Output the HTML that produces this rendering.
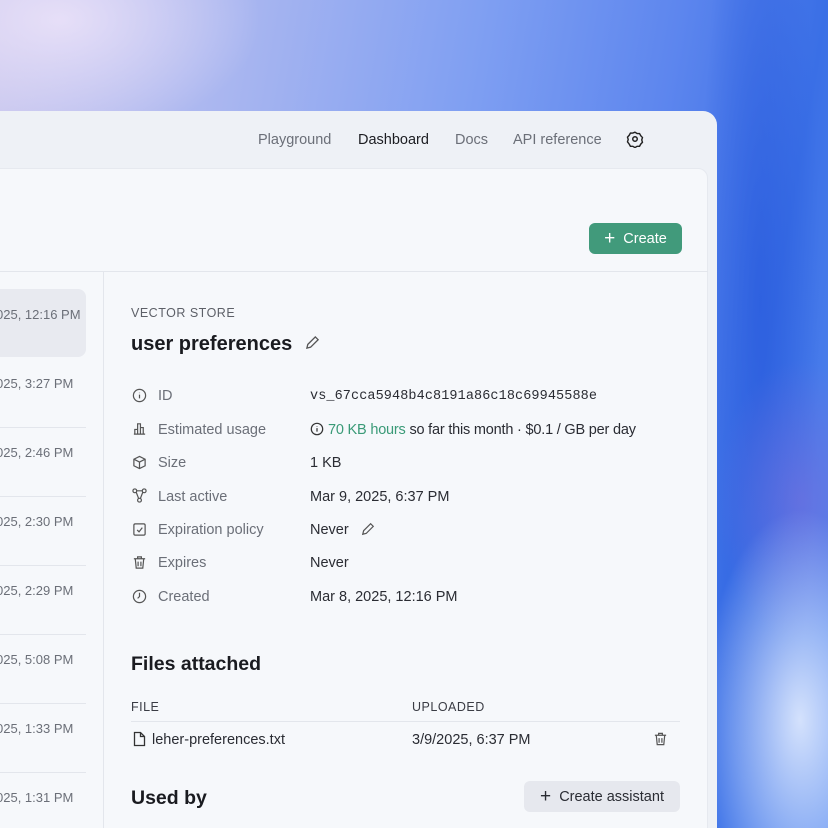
<!DOCTYPE html>
<html style="overflow:hidden;width:828px;height:828px"><head><meta charset="utf-8"><style>
*{margin:0;padding:0;box-sizing:border-box}
body{width:828px;height:828px;overflow:hidden;position:relative;font-family:"Liberation Sans",sans-serif;
background:linear-gradient(100deg,#c9c7ee 0%,#a9b6f0 25%,#7f9ff2 50%,#5d86ee 70%,#3a6fe6 85%,#5a8cf0 100%);}
.bg2{position:absolute;inset:0;background:
radial-gradient(ellipse 200px 120px at 60px 20px,rgba(240,230,250,.8),transparent),
radial-gradient(ellipse 140px 300px at 800px 720px,rgba(235,242,255,.85),transparent 70%),
radial-gradient(ellipse 120px 200px at 800px 500px,rgba(120,110,220,.6),transparent 70%),
radial-gradient(ellipse 60px 500px at 760px 300px,rgba(40,90,220,.7),transparent);}
.win{position:absolute;left:-20px;top:111px;width:737px;height:740px;background:#eef1f6;border-radius:14px;}
.card{position:absolute;left:-20px;top:168px;width:728px;height:700px;background:#f6f8fb;border-radius:10px;border:1px solid #e6e9ef}
.nav{position:absolute;top:132px;font-size:14.5px;color:#6b6f78}
.hl{position:absolute;left:0;top:271px;width:708px;height:1px;background:#e3e6ec}
.vl{position:absolute;left:103px;top:272px;width:1px;height:560px;background:#e3e6ec}
.sel{position:absolute;left:-10px;top:289px;width:96px;height:68px;background:#e8eaf0;border-radius:8px}
.li{position:absolute;left:-4px;font-size:13px;color:#6b6f78}
.sep{position:absolute;left:0;width:86px;height:1px;background:#e3e6ec}
.t{position:absolute;white-space:nowrap}
.lab{font-size:14.5px;color:#6b6f78;left:158px}
.val{font-size:14.5px;color:#2a2c33;left:310px}
.ic{position:absolute;left:132px;width:15px;height:15px}
</style></head><body>
<div class="bg2"></div>
<div class="win"></div>
<div class="card"></div>
<div class="nav" style="left:258px">Playground</div>
<div class="nav" style="left:358px;color:#1c1d22">Dashboard</div>
<div class="nav" style="left:455px">Docs</div>
<div class="nav" style="left:513px">API reference</div>
<svg style="position:absolute;left:626px;top:130px" width="18" height="18" viewBox="0 0 24 24" fill="none" stroke="#222" stroke-width="2"><path d="M12 2.5l3 1.8 3.4.1 1.7 3 2.4 2.6-1 3.3 1 3.3-2.4 2.6-1.7 3-3.4.1-3 1.8-3-1.8-3.4-.1-1.7-3L1.5 16l1-3.3-1-3.3 2.4-2.6 1.7-3 3.4-.1z" transform="scale(.95) translate(.6 .6)"/><circle cx="12" cy="12" r="3"/></svg>
<div style="position:absolute;left:589px;top:223px;width:93px;height:31px;background:#419a7b;border-radius:6px;color:#fff;font-size:14.5px;line-height:31px;text-align:center"><span style="font-size:19px;vertical-align:-1px">+</span>&nbsp; Create</div>
<div class="hl"></div><div class="vl"></div>
<div class="sel"></div>
<div class="li" style="top:307px">025, 12:16 PM</div>
<div class="li" style="top:376px">025, 3:27 PM</div>
<div class="sep" style="top:427px"></div>
<div class="li" style="top:445px">025, 2:46 PM</div>
<div class="sep" style="top:496px"></div>
<div class="li" style="top:514px">025, 2:30 PM</div>
<div class="sep" style="top:565px"></div>
<div class="li" style="top:583px">025, 2:29 PM</div>
<div class="sep" style="top:634px"></div>
<div class="li" style="top:652px">025, 5:08 PM</div>
<div class="sep" style="top:703px"></div>
<div class="li" style="top:721px">025, 1:33 PM</div>
<div class="sep" style="top:772px"></div>
<div class="li" style="top:790px">025, 1:31 PM</div>

<div class="t" style="left:131px;top:306px;font-size:12.5px;color:#5d6068;letter-spacing:.5px">VECTOR STORE</div>
<div class="t" style="left:131px;top:333px;font-size:20px;font-weight:bold;color:#1a1b20">user preferences</div>
<svg style="position:absolute;left:305px;top:335px" width="15" height="15" viewBox="0 0 16 16" fill="none" stroke="#555" stroke-width="1.4"><path d="M2 14l1-4 8-8 3 3-8 8z"/></svg>

<svg class="ic" style="top:388px" viewBox="0 0 16 16" fill="none" stroke="#555" stroke-width="1.3"><circle cx="8" cy="8" r="6.5"/><path d="M8 7v4M8 5v.5"/></svg>
<div class="t lab" style="top:388px">ID</div>
<div class="t val" style="top:389px;font-family:'Liberation Mono',monospace;font-size:13.5px;letter-spacing:.1px">vs_67cca5948b4c8191a86c18c69945588e</div>
<svg class="ic" style="top:421px" viewBox="0 0 16 16" fill="none" stroke="#555" stroke-width="1.3"><path d="M2 14h12M3 14V9h3v5M6 14V3h3v11M9 14V7h3v7"/></svg>
<div class="t lab" style="top:422px">Estimated usage</div>
<svg style="position:absolute;left:310px;top:422px" width="14" height="14" viewBox="0 0 16 16" fill="none" stroke="#333" stroke-width="1.4"><circle cx="8" cy="8" r="6.5"/><path d="M8 7v4M8 5v.5"/></svg>
<div class="t val" style="top:422px;left:328px;letter-spacing:-.2px"><span style="color:#3a9a77">70 KB hours</span> so far this month · $0.1 / GB per day</div>
<svg class="ic" style="top:455px" viewBox="0 0 16 16" fill="none" stroke="#555" stroke-width="1.3"><path d="M8 1.5l6 3v7l-6 3-6-3v-7zM2 4.5l6 3 6-3M8 7.5v7"/></svg>
<div class="t lab" style="top:455px">Size</div><div class="t val" style="top:455px">1 KB</div>
<svg class="ic" style="top:488px" viewBox="0 0 16 16" fill="none" stroke="#555" stroke-width="1.3"><circle cx="3" cy="3" r="2"/><circle cx="13" cy="3" r="2"/><circle cx="8" cy="13" r="2"/><path d="M4.5 4.5L7 11M11.5 4.5L9 11M5 3h6"/></svg>
<div class="t lab" style="top:489px">Last active</div><div class="t val" style="top:489px">Mar 9, 2025, 6:37 PM</div>
<svg class="ic" style="top:522px" viewBox="0 0 16 16" fill="none" stroke="#555" stroke-width="1.3"><rect x="2" y="2" width="12" height="12" rx="1.5"/><path d="M5.5 8.5l2 2 3.5-4.5"/></svg>
<div class="t lab" style="top:522px">Expiration policy</div><div class="t val" style="top:522px">Never</div>
<svg style="position:absolute;left:361px;top:522px" width="14" height="14" viewBox="0 0 16 16" fill="none" stroke="#555" stroke-width="1.4"><path d="M2 14l1-4 8-8 3 3-8 8z"/></svg>
<svg class="ic" style="top:555px" viewBox="0 0 16 16" fill="none" stroke="#555" stroke-width="1.3"><path d="M2 4h12M6 4V2h4v2M3.5 4l1 10h7l1-10M6.5 7v5M9.5 7v5"/></svg>
<div class="t lab" style="top:555px">Expires</div><div class="t val" style="top:555px">Never</div>
<svg class="ic" style="top:589px" viewBox="0 0 16 16" fill="none" stroke="#555" stroke-width="1.3"><circle cx="8" cy="8" r="6.5"/><path d="M8 4v4l-2 2"/></svg>
<div class="t lab" style="top:589px">Created</div><div class="t val" style="top:589px">Mar 8, 2025, 12:16 PM</div>

<div class="t" style="left:131px;top:653px;font-size:19.5px;font-weight:bold;color:#1a1b20">Files attached</div>
<div class="t" style="left:131px;top:700px;font-size:12.5px;color:#3a3c44;letter-spacing:.5px">FILE</div>
<div class="t" style="left:412px;top:700px;font-size:12.5px;color:#3a3c44;letter-spacing:.5px">UPLOADED</div>
<div style="position:absolute;left:131px;top:721px;width:549px;height:1px;background:#e3e6ec"></div>
<svg style="position:absolute;left:133px;top:731px" width="13" height="16" viewBox="0 0 13 16" fill="none" stroke="#333" stroke-width="1.3"><path d="M1.5 1.5h6l4 4v9h-10zM7.5 1.5v4h4"/></svg>
<div class="t val" style="left:152px;top:732px">leher-preferences.txt</div>
<div class="t val" style="left:412px;top:732px">3/9/2025, 6:37 PM</div>
<svg style="position:absolute;left:653px;top:731px" width="15" height="16" viewBox="0 0 16 16" fill="none" stroke="#555" stroke-width="1.3"><path d="M2 4h12M6 4V2h4v2M3.5 4l1 10h7l1-10M6.5 7v5M9.5 7v5"/></svg>

<div class="t" style="left:131px;top:787px;font-size:19.5px;font-weight:bold;color:#1a1b20">Used by</div>
<div style="position:absolute;left:524px;top:781px;width:156px;height:31px;background:#e6e8ee;border-radius:6px;color:#2a2c33;font-size:14.5px;line-height:31px;text-align:center"><span style="font-size:19px;vertical-align:-1px">+</span>&nbsp; Create assistant</div>
</body></html>
